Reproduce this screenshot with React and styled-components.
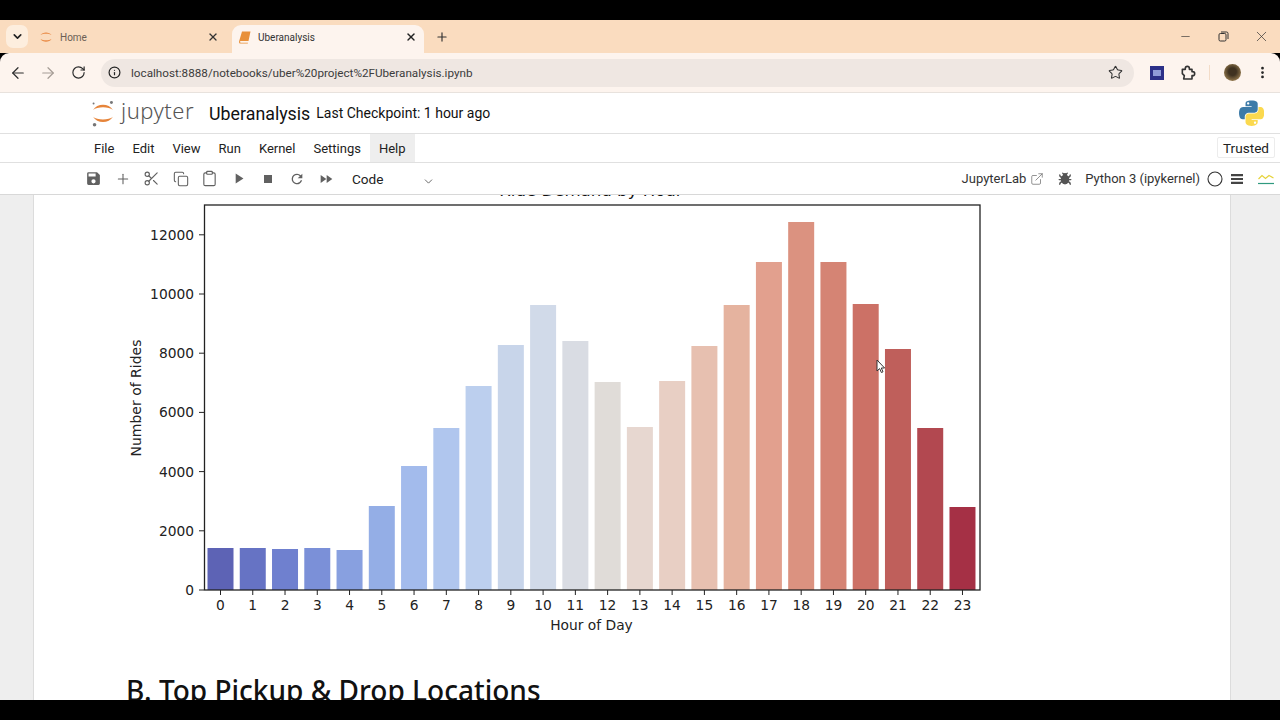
import React from 'react'
import styled, { createGlobalStyle } from 'styled-components'
import {
  ChevronDown, X, Plus, ArrowLeft, ArrowRight, RotateCw, Info, Star, Minus,
  EllipsisVertical, Scissors, Copy, Clipboard, ExternalLink, Bug,
} from 'lucide-react'

const GlobalStyle = createGlobalStyle`
  html, body { margin: 0; padding: 0; background: #000; }
  * { box-sizing: border-box; }
`

const Screen = styled.div`
  width: 1280px;
  height: 720px;
  display: flex;
  flex-direction: column;
  background: #000;
  overflow: hidden;
  font-family: Roboto, "Noto Sans", sans-serif;
  color: #1b1b1b;
`

const Letterbox = styled.div`
  height: 20px;
  flex: none;
  background: #000;
`

const TabStrip = styled.div`
  height: 33px;
  flex: none;
  background: #fadcbf;
  display: flex;
  align-items: flex-end;
  padding-left: 6px;
`

const TabMenu = styled.div`
  width: 22px;
  height: 23px;
  margin-bottom: 5px;
  border-radius: 7px;
  background: #fdeede;
  display: flex;
  align-items: center;
  justify-content: center;
  color: #222;
`

const Tab = styled.div`
  width: ${p => p.$width}px;
  height: 28px;
  margin-left: ${p => p.$offset}px;
  padding: 0 7px 4px 7px;
  display: flex;
  align-items: center;
  border-radius: 9px 9px 0 0;
  background: ${p => (p.$active ? '#fdf4ee' : 'transparent')};
  font-size: 10px;
  color: ${p => (p.$active ? '#333' : '#6b5f55')};
`

const TabLabel = styled.span`
  flex: 1;
  margin-left: 7px;
`

const NewTab = styled.div`
  width: 20px;
  height: 23px;
  margin: 0 0 5px 8px;
  display: flex;
  align-items: center;
  justify-content: center;
  color: #333;
`

const WindowControls = styled.div`
  margin-left: auto;
  height: 33px;
  display: flex;
  align-items: center;
  color: #333;
`

const WindowButton = styled.div`
  width: 38px;
  display: flex;
  justify-content: center;
  padding-bottom: 1px;
`

const BrowserBar = styled.div`
  height: 39px;
  flex: none;
  background: #fdf4ee;
  border-radius: 9px 9px 0 0;
  display: flex;
  align-items: center;
  padding-left: 3px;
  color: #333;
`

const NavButton = styled.div`
  width: 30px;
  display: flex;
  justify-content: center;
  color: ${p => (p.$dim ? '#a59c95' : '#2d2d2d')};
`

const AddressBar = styled.div`
  width: 1033px;
  height: 28px;
  margin-left: 8px;
  padding: 0 11px 0 7px;
  border-radius: 14px;
  background: #efe7e2;
  display: flex;
  align-items: center;
  font-size: 11.7px;
  color: #3c3c3c;
`

const AddressText = styled.span`
  flex: 1;
  margin-left: 10px;
`

const Extensions = styled.div`
  display: flex;
  align-items: center;
  margin-left: 16px;
`

const ExtensionBadge = styled.div`
  width: 14px;
  height: 14px;
  background: #2c3088;
  display: flex;
  align-items: center;
  justify-content: center;
  &::after {
    content: '';
    width: 8px;
    height: 6px;
    background: #8f9bd8;
  }
`

const PuzzleSlot = styled.div`
  margin-left: 16px;
  display: flex;
`

const ToolbarDivider = styled.div`
  width: 1px;
  height: 15px;
  margin-left: 13px;
  background: #f3dcc8;
`

const Avatar = styled.div`
  width: 17px;
  height: 17px;
  margin-left: 14px;
  border-radius: 50%;
  background: radial-gradient(circle at 50% 45%, #3f3220 0 30%, #8a7148 70%, #6d5a3c 100%);
`

const MoreSlot = styled.div`
  margin-left: 14px;
  display: flex;
`

const JupyterHeader = styled.div`
  height: 42px;
  flex: none;
  background: #fff;
  border-top: 1px solid #e8e2dd;
  border-bottom: 1px solid #e0e0e0;
  display: flex;
  align-items: center;
  padding-left: 91px;
`

const LogoWord = styled.span`
  margin-left: 6px;
  font-family: "Noto Sans", sans-serif;
  font-size: 22px;
  font-weight: 300;
  line-height: 26px;
  letter-spacing: 0.5px;
  color: #555;
  position: relative;
  top: -3px;
`

const NotebookName = styled.span`
  margin-left: 15px;
  font-size: 17.8px;
  color: #111;
`

const Checkpoint = styled.span`
  margin-left: 6px;
  font-size: 14px;
  color: #111;
`

const PythonSlot = styled.div`
  margin-left: auto;
  margin-right: 16px;
  display: flex;
`

const MenuBar = styled.div`
  height: 29px;
  flex: none;
  background: #fff;
  border-bottom: 1px solid #e0e0e0;
  display: flex;
  align-items: stretch;
  padding-left: 85px;
  font-size: 13px;
  color: #222;
`

const MenuItem = styled.div`
  padding: 0 9px;
  display: flex;
  align-items: center;
  background: ${p => (p.$active ? '#eeeeee' : 'transparent')};
`

const TrustedBox = styled.div`
  margin: 3px 5px 4px auto;
  width: 58px;
  border: 1px solid #ececec;
  border-radius: 2px;
  display: flex;
  align-items: center;
  justify-content: center;
  font-size: 13.6px;
  color: #222;
`

const NotebookToolbar = styled.div`
  height: 32px;
  flex: none;
  background: #fff;
  border-bottom: 1px solid #d8d8d8;
  display: flex;
  align-items: center;
  padding-left: 79px;
  color: #616161;
  position: relative;
  z-index: 1;
`

const ToolButton = styled.div`
  width: 29px;
  display: flex;
  justify-content: center;
`

const CellType = styled.div`
  width: 83px;
  margin-left: 12px;
  display: flex;
  align-items: center;
  justify-content: space-between;
  font-size: 13.6px;
  color: #222;
`

const CellChevron = styled(ChevronDown)`
  margin-top: 5px;
  color: #555;
`

const KernelArea = styled.div`
  margin-left: auto;
  display: flex;
  align-items: center;
  font-size: 13px;
  color: #333;
  padding-right: 6px;
`

const LabLink = styled.span`
  display: flex;
  align-items: center;
  gap: 4px;
`

const KernelName = styled.span`
  margin-left: 13px;
`

const KernelSlot = styled.div`
  margin-left: ${p => p.$gap}px;
  display: flex;
`

const Workspace = styled.div`
  flex: 1;
  min-height: 0;
  position: relative;
  overflow: hidden;
  background: #eeeeee;
  padding: 0 49px 0 33px;
`

const NotebookPage = styled.div`
  height: 100%;
  background: #fff;
  border-left: 1px solid #dcdcdc;
  border-right: 1px solid #dcdcdc;
  overflow: hidden;
`

const ChartFigure = styled.svg`
  display: block;
  width: 900px;
  height: 460px;
  margin: -9px 0 0 66px;
  font-family: "DejaVu Sans", sans-serif;
`

const SectionHeading = styled.h2`
  margin: 26px 0 0 92px;
  font-family: "Noto Sans", "Open Sans", sans-serif;
  font-size: 28px;
  line-height: 36px;
  font-weight: 500;
  color: #111;
  white-space: nowrap;
`

const Pointer = styled.svg`
  position: absolute;
  left: 876px;
  top: 164px;
`

const BARS = [
  [548, '#5d63b5'], [548, '#6673c4'], [549, '#6f80cf'], [548, '#7b90d8'], [550, '#88a0e0'], [506, '#94aee6'],
  [466, '#a3bbec'], [428, '#b0c6ee'], [386, '#bccfee'], [345, '#c8d5ea'], [305, '#d1dae9'], [341, '#d9dce3'],
  [382, '#e0dcd8'], [427, '#e7d7d0'], [381, '#e8cfc4'], [346, '#e7c0b0'], [305, '#e5b39f'], [262, '#e2a08e'],
  [222, '#db9280'], [262, '#d58474'], [304, '#cc7166'], [349, '#bf5f5b'], [428, '#b24850'], [507, '#a53045'],
]

const Y_TICKS = [0, 2000, 4000, 6000, 8000, 10000, 12000]

const barCenter = i => 220.5 + i * 32.26
const tickY = v => 590 - (v / 2000) * 59.2

const RideChart = () => (
  <ChartFigure viewBox="100 186 900 460">
    <text x="591" y="196" textAnchor="middle" fontSize="16.6" fill="#111">Ride Demand by Hour</text>
    {BARS.map(([top, color], i) => (
      <rect key={i} x={barCenter(i) - 13} y={top} width="26" height={590 - top} fill={color} />
    ))}
    <rect x="204.5" y="205" width="775.5" height="385" fill="none" stroke="#222" strokeWidth="1.3" />
    {Y_TICKS.map(v => (
      <g key={v}>
        <line x1="199" x2="204" y1={tickY(v)} y2={tickY(v)} stroke="#222" strokeWidth="1" />
        <text x="194" y={tickY(v) + 5} textAnchor="end" fontSize="13.8" fill="#222">{v}</text>
      </g>
    ))}
    {BARS.map((_, i) => (
      <g key={i}>
        <line x1={barCenter(i)} x2={barCenter(i)} y1="590" y2="595" stroke="#222" strokeWidth="1" />
        <text x={barCenter(i)} y="610" textAnchor="middle" fontSize="13.8" fill="#222">{i}</text>
      </g>
    ))}
    <text x="591.5" y="630" textAnchor="middle" fontSize="13.8" fill="#222">Hour of Day</text>
    <text x="141" y="398" textAnchor="middle" fontSize="14" fill="#222" transform="rotate(-90 141 398)">Number of Rides</text>
  </ChartFigure>
)

const JupyterMark = ({ size = 24 }) => (
  <svg width={size} height={size * 1.2} viewBox="0 0 24 29">
    <path d="M2 11 C6 4 18 4 22 11 C18 7.5 6 7.5 2 11 Z" fill="#e6843a" />
    <path d="M2 18 C6 25 18 25 22 18 C18 21.5 6 21.5 2 18 Z" fill="#e6843a" />
    <circle cx="20.5" cy="3.5" r="1.5" fill="#767677" />
    <circle cx="2.5" cy="4.5" r="1" fill="#767677" />
    <circle cx="3.5" cy="26" r="1.8" fill="#767677" />
  </svg>
)

const HomeMark = () => (
  <svg width="14" height="14" viewBox="0 0 14 14">
    <path d="M1.5 5 C3.5 1.5 10.5 1.5 12.5 5 C10 3.3 4 3.3 1.5 5 Z" fill="#e98a45" />
    <path d="M1.5 9 C3.5 12.5 10.5 12.5 12.5 9 C10 10.7 4 10.7 1.5 9 Z" fill="#e98a45" />
  </svg>
)

const BookMark = () => (
  <svg width="12" height="13" viewBox="0 0 12 13">
    <path d="M3 0.5 H11.5 L9.5 10 H2 C0.8 10 0.6 11.8 2 11.8 H9 L8.8 12.6 H1.6 C0.3 12.6 -0.2 11.4 0.2 10 Z" fill="#e8903a" />
  </svg>
)

const PythonLogo = () => (
  <svg width="25" height="26" viewBox="0 0 110 111">
    <path fill="#3d7ba8" d="M54.919 0.001c-4.584.022-8.961.413-12.813 1.095C30.76 3.099 28.7 7.295 28.7 15.032v10.219h26.813v3.406H18.638c-7.793 0-14.616 4.684-16.75 13.594-2.462 10.213-2.571 16.586 0 27.25 1.906 7.938 6.458 13.594 14.25 13.594h9.219v-12.25c0-8.85 7.657-16.656 16.75-16.656h26.781c7.454 0 13.406-6.138 13.406-13.625V15.032c0-7.266-6.13-12.725-13.406-13.937C64.282.328 59.502-.02 54.918.001zm-14.5 8.219c2.77 0 5.031 2.299 5.031 5.125 0 2.816-2.262 5.094-5.031 5.094-2.78 0-5.031-2.278-5.031-5.094 0-2.826 2.251-5.125 5.031-5.125z" />
    <path fill="#fbd94f" d="M85.638 28.657v11.906c0 9.231-7.826 17-16.75 17H42.106c-7.336 0-13.406 6.278-13.406 13.625v25.531c0 7.266 6.319 11.54 13.406 13.625 8.487 2.496 16.626 2.947 26.781 0 6.75-1.954 13.406-5.888 13.406-13.625V86.501H55.512v-3.406h40.188c7.793 0 10.696-5.436 13.406-13.594 2.8-8.399 2.68-16.476 0-27.25-1.926-7.757-5.604-13.594-13.406-13.594H85.638zM70.575 93.313c2.78 0 5.031 2.278 5.031 5.094 0 2.826-2.251 5.125-5.031 5.125-2.77 0-5.031-2.299-5.031-5.125 0-2.816 2.261-5.094 5.031-5.094z" />
  </svg>
)

const PuzzleIcon = () => (
  <svg width="16" height="16" viewBox="0 0 24 24" fill="none" stroke="#333" strokeWidth="2.4" strokeLinejoin="round">
    <path d="M3.5 6.5 H8 V5 a3 3 0 0 1 6 0 V6.5 H18 V10 h1 a3 3 0 0 1 0 6 H18 V21 H5.5 L6.5 16 L3.5 13 Z" />
  </svg>
)

const RestoreIcon = () => (
  <svg width="11" height="11" viewBox="0 0 11 11" fill="none" stroke="#333" strokeWidth="1">
    <rect x="1" y="2.5" width="7" height="7.5" rx="1.3" />
    <path d="M3 1 H8.5 A1.5 1.5 0 0 1 10 2.5 V8" />
  </svg>
)

const SaveIcon = () => (
  <svg width="17" height="17" viewBox="0 0 24 24" fill="#616161">
    <path d="M17 3H5a2 2 0 0 0-2 2v14a2 2 0 0 0 2 2h14a2 2 0 0 0 2-2V7l-4-4zm-5 16a3 3 0 1 1 0-6 3 3 0 0 1 0 6zm3-10H5V5h10v4z" />
  </svg>
)

const PlayIcon = () => (
  <svg width="17" height="17" viewBox="0 0 24 24" fill="#616161"><path d="M8 5v14l11-7z" /></svg>
)

const StopIcon = () => (
  <svg width="16" height="16" viewBox="0 0 24 24" fill="#616161"><path d="M6 6h12v12H6z" /></svg>
)

const RestartIcon = () => (
  <svg width="16" height="16" viewBox="0 0 24 24" fill="#616161">
    <path d="M17.65 6.35A7.95 7.95 0 0 0 12 4a8 8 0 1 0 7.73 10h-2.08A6 6 0 1 1 12 6c1.66 0 3.14.69 4.22 1.78L13 11h7V4l-2.35 2.35z" />
  </svg>
)

const FastForwardIcon = () => (
  <svg width="16" height="16" viewBox="0 0 24 24" fill="#616161"><path d="M4 18l8.5-6L4 6v12zm9-12v12l8.5-6L13 6z" /></svg>
)

const KernelMenuIcon = () => (
  <svg width="12" height="12" viewBox="0 0 12 12" fill="#444">
    <path d="M0 1h12v2.2H0zM0 4.9h12v2.2H0zM0 8.8h12V11H0z" />
  </svg>
)

const KernelStatus = () => (
  <svg width="16" height="16" viewBox="0 0 16 16" fill="none" stroke="#333" strokeWidth="1.1">
    <circle cx="8" cy="8" r="7" />
  </svg>
)

const MemorySpark = () => (
  <svg width="16" height="12" viewBox="0 0 16 12" fill="none">
    <path d="M0.5 6 L4 2.5 L7.5 5.5 L11 2.5 L15.5 5" stroke="#e6d33a" strokeWidth="1.2" />
    <path d="M0 10.5 H16" stroke="#2f9a7f" strokeWidth="1.2" />
  </svg>
)

const MENU = ['File', 'Edit', 'View', 'Run', 'Kernel', 'Settings']

export default function App() {
  return (
    <Screen>
      <GlobalStyle />
      <Letterbox />
      <TabStrip>
        <TabMenu><ChevronDown size={13} strokeWidth={3} /></TabMenu>
        <Tab $width={194} $offset={4}>
          <HomeMark />
          <TabLabel>Home</TabLabel>
          <X size={12} strokeWidth={2.6} color="#333" />
        </Tab>
        <Tab $active $width={192} $offset={6}>
          <BookMark />
          <TabLabel>Uberanalysis</TabLabel>
          <X size={12} strokeWidth={2.8} color="#222" />
        </Tab>
        <NewTab><Plus size={14} strokeWidth={2} /></NewTab>
        <WindowControls>
          <WindowButton><Minus size={13} strokeWidth={1.2} /></WindowButton>
          <WindowButton><RestoreIcon /></WindowButton>
          <WindowButton><X size={17} strokeWidth={1} /></WindowButton>
        </WindowControls>
      </TabStrip>
      <BrowserBar>
        <NavButton><ArrowLeft size={18} strokeWidth={1.6} /></NavButton>
        <NavButton $dim><ArrowRight size={18} strokeWidth={1.6} /></NavButton>
        <NavButton><RotateCw size={15} strokeWidth={1.9} /></NavButton>
        <AddressBar>
          <Info size={13} strokeWidth={2.2} color="#222" />
          <AddressText>localhost:8888/notebooks/uber%20project%2FUberanalysis.ipynb</AddressText>
          <Star size={15} strokeWidth={1.7} color="#333" />
        </AddressBar>
        <Extensions>
          <ExtensionBadge />
          <PuzzleSlot><PuzzleIcon /></PuzzleSlot>
          <ToolbarDivider />
          <Avatar />
          <MoreSlot><EllipsisVertical size={15} strokeWidth={2.4} color="#222" /></MoreSlot>
        </Extensions>
      </BrowserBar>
      <JupyterHeader>
        <JupyterMark />
        <LogoWord>jupyter</LogoWord>
        <NotebookName>Uberanalysis</NotebookName>
        <Checkpoint>Last Checkpoint: 1 hour ago</Checkpoint>
        <PythonSlot><PythonLogo /></PythonSlot>
      </JupyterHeader>
      <MenuBar>
        {MENU.map(m => <MenuItem key={m}>{m}</MenuItem>)}
        <MenuItem $active>Help</MenuItem>
        <TrustedBox>Trusted</TrustedBox>
      </MenuBar>
      <NotebookToolbar>
        <ToolButton><SaveIcon /></ToolButton>
        <ToolButton><Plus size={16} strokeWidth={1.6} /></ToolButton>
        <ToolButton><Scissors size={17} strokeWidth={1.6} /></ToolButton>
        <ToolButton><Copy size={16} strokeWidth={1.6} /></ToolButton>
        <ToolButton><Clipboard size={17} strokeWidth={1.6} /></ToolButton>
        <ToolButton><PlayIcon /></ToolButton>
        <ToolButton><StopIcon /></ToolButton>
        <ToolButton><RestartIcon /></ToolButton>
        <ToolButton><FastForwardIcon /></ToolButton>
        <CellType>Code <CellChevron size={13} strokeWidth={1.6} /></CellType>
        <KernelArea>
          <LabLink>JupyterLab <ExternalLink size={14} strokeWidth={1.2} color="#666" /></LabLink>
          <KernelSlot $gap={14}><Bug size={14} strokeWidth={2.2} color="#555" fill="#555" /></KernelSlot>
          <KernelName>Python 3 (ipykernel)</KernelName>
          <KernelSlot $gap={7}><KernelStatus /></KernelSlot>
          <KernelSlot $gap={8}><KernelMenuIcon /></KernelSlot>
          <KernelSlot $gap={15}><MemorySpark /></KernelSlot>
        </KernelArea>
      </NotebookToolbar>
      <Workspace>
        <NotebookPage>
          <RideChart />
          <SectionHeading>B. Top Pickup &amp; Drop Locations</SectionHeading>
        </NotebookPage>
        <Pointer width="10" height="15" viewBox="0 0 10 15">
          <path d="M1 1 V12 L3.6 9.6 L5.4 13.5 L7 12.8 L5.3 9 H8.6 Z" fill="#fff" stroke="#333" strokeWidth="1" />
        </Pointer>
      </Workspace>
      <Letterbox />
    </Screen>
  )
}
